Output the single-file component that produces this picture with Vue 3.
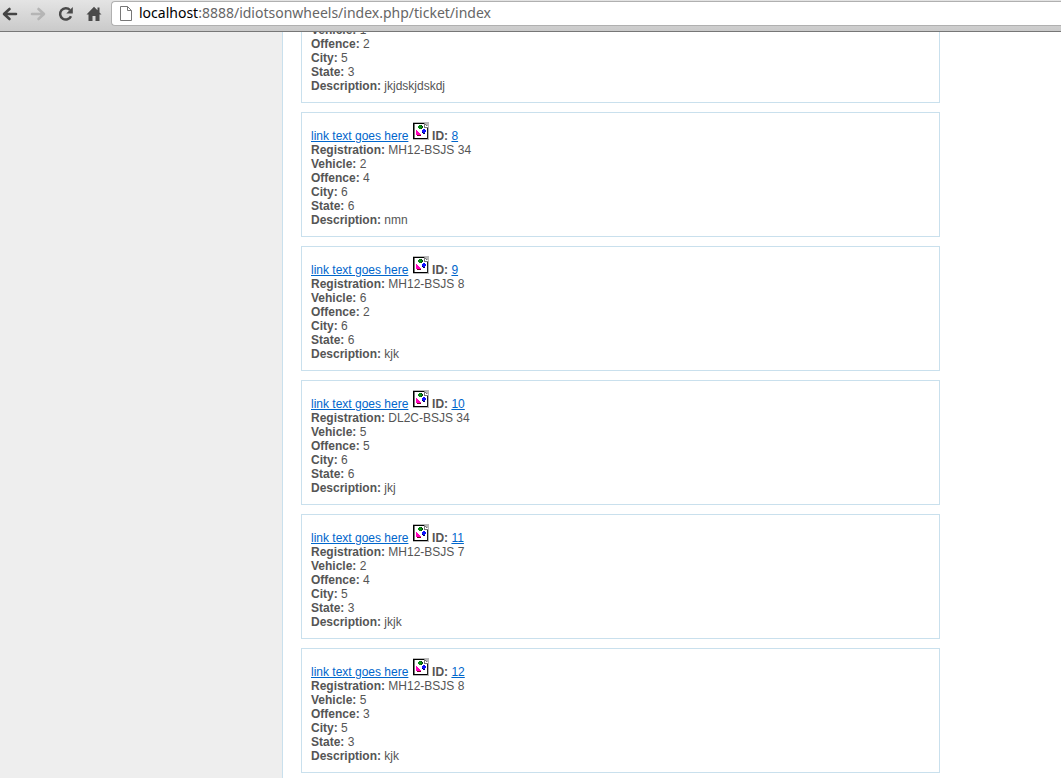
<script setup>
const tickets = [
  { id: 8, fields: [['Registration', 'MH12-BSJS 34'], ['Vehicle', '2'], ['Offence', '4'], ['City', '6'], ['State', '6'], ['Description', 'nmn']] },
  { id: 9, fields: [['Registration', 'MH12-BSJS 8'], ['Vehicle', '6'], ['Offence', '2'], ['City', '6'], ['State', '6'], ['Description', 'kjk']] },
  { id: 10, fields: [['Registration', 'DL2C-BSJS 34'], ['Vehicle', '5'], ['Offence', '5'], ['City', '6'], ['State', '6'], ['Description', 'jkj']] },
  { id: 11, fields: [['Registration', 'MH12-BSJS 7'], ['Vehicle', '2'], ['Offence', '4'], ['City', '5'], ['State', '3'], ['Description', 'jkjk']] },
  { id: 12, fields: [['Registration', 'MH12-BSJS 8'], ['Vehicle', '5'], ['Offence', '3'], ['City', '5'], ['State', '3'], ['Description', 'kjk']] },
]
const firstFields = [['Vehicle', '1'], ['Offence', '2'], ['City', '5'], ['State', '3'], ['Description', 'jkjdskjdskdj']]
</script>

<template>
  <div class="browser">
    <header class="toolbar">
      <nav class="buttons">
        <button type="button" aria-label="Back">
          <svg viewBox="0 0 16 16"><path d="M14 8H2.500M7.500 3L2 8L7.500 13" fill="none" stroke="#444" stroke-width="2.600" stroke-linecap="round" stroke-linejoin="round" /></svg>
        </button>
        <button type="button" aria-label="Forward" disabled>
          <svg viewBox="0 0 16 16"><path d="M2 8H13M8.500 3L14 8L8.500 13" fill="none" stroke="#b5b5b5" stroke-width="2.600" stroke-linecap="round" stroke-linejoin="round" /></svg>
        </button>
        <button type="button" aria-label="Reload">
          <svg viewBox="0 0 16 16"><path d="M13 10.200A5.700 5.700 0 1 1 12 4" fill="none" stroke="#4a4a4a" stroke-width="2.500" /><path d="M14.800 1V7.500H8.300Z" fill="#4a4a4a" /></svg>
        </button>
        <button type="button" aria-label="Home">
          <svg viewBox="0 0 16 16"><path d="M8 0.800L0.500 8.500H2.500V15H6.500V10H9.500V15H13.500V8.500H15.500L13.500 6.400V1.500H11.500V4.300Z" fill="#4a4a4a" /></svg>
        </button>
      </nav>
      <div class="address">
        <svg class="doc" viewBox="0 0 12 16"><path d="M0.500 0.500H7.500L11.500 4.500V14.500H0.500ZM7.500 0.500V4.500H11.500" fill="#fff" stroke="#777" /></svg>
        <a class="url" href="#"><b>localhost</b>:8888/idiotsonwheels/index.php/ticket/index</a>
      </div>
    </header>

    <div class="viewport">
      <main class="page">
        <article class="view first">
          <p v-for="[label, value] in firstFields" :key="label"><b>{{ label }}:</b> {{ value }}</p>
        </article>
        <article v-for="t in tickets" :key="t.id" class="view">
          <p>
            <a href="#">link text goes here</a>&nbsp;<svg class="pic" viewBox="0 0 16 18" shape-rendering="crispEdges">
              <path d="M0 0H16V18H0Z" fill="#b8b8b8" />
              <path d="M1 1H11L15 5V17H1Z" fill="#fff" />
              <path d="M0 1H11V2H2V16H14V17H0Z" fill="#000" />
              <path d="M1 2H2V16H1Z" fill="#777" />
              <path d="M14 6H15V17H14Z" fill="#222" />
              <path d="M11 1H12V5H15V6H11ZM12 2H13V3H12ZM13 3H14V4H13Z" fill="#777" />
              <path d="M6 3H8V4H9V6H8V7H6V6H5V4H6Z" fill="#078b13" />
              <path d="M8 3H9V4H10V6H9V7H8V6H9V4H8Z" fill="#033d0b" />
              <path d="M10 7H12V8H13V10H12V11H10V10H9V8H10Z" fill="#11f" />
              <path d="M9 10H10V11H12V12H10V11H9Z" fill="#006" />
              <path d="M3 8H4V9H5V10H6V11H7V12H8V13H3Z" fill="#f0b" />
              <path d="M4 13H8V14H4Z" fill="#702" />
            </svg>&nbsp;<b>ID:</b> <a href="#">{{ t.id }}</a>
          </p>
          <p v-for="[label, value] in t.fields" :key="label"><b>{{ label }}:</b> {{ value }}</p>
        </article>
      </main>
    </div>
  </div>
</template>

<style>
body { margin: 0; background: #eee; }
</style>

<style scoped>
.browser { display: flex; flex-direction: column; height: 100vh; overflow: hidden; }
.toolbar { display: flex; flex: none; box-sizing: border-box; height: 32px; padding: 1px 0 5px; border-bottom: 1px solid #777; background: linear-gradient(#e4e4e4, #cacaca); }
.buttons { display: flex; align-items: center; gap: 12px; padding: 0 9px 0 2px; }
.buttons button { display: block; width: 16px; height: 16px; padding: 0; border: 0; background: none; }
.buttons svg { display: block; width: 16px; height: 16px; }
.address { display: flex; flex: 1; align-items: center; gap: 7px; padding-left: 8px; border: 1px solid #b0b0b0; border-right: 0; border-radius: 4px 0 0 4px; background: #fff; }
.doc { width: 12px; height: 16px; }
.url { padding-bottom: 2px; color: #666; font: 14px/16px "Noto Sans", sans-serif; text-decoration: none; white-space: nowrap; }
.url b { color: #000; font-weight: 400; }
.viewport { flex: 1; min-height: 0; overflow: hidden; padding-left: 282px; background: #eee; }
.page { box-sizing: border-box; min-height: 100%; padding: 0 121px 5px 18px; border-left: 1px solid #c9e0ed; background: #fff; }
.view { box-sizing: border-box; min-height: 125px; margin-bottom: 9px; padding: 9px; border: 1px solid #c9e0ed; color: #555; font: 12px/14px "Liberation Sans", Arial, sans-serif; }
.view p { margin: 0; }
.view a { color: #06c; }
.first { min-height: 0; margin-top: -9px; padding-top: 0; border-top: 0; }
.pic { width: 16px; height: 18px; margin-left: 1px; vertical-align: baseline; }
</style>
